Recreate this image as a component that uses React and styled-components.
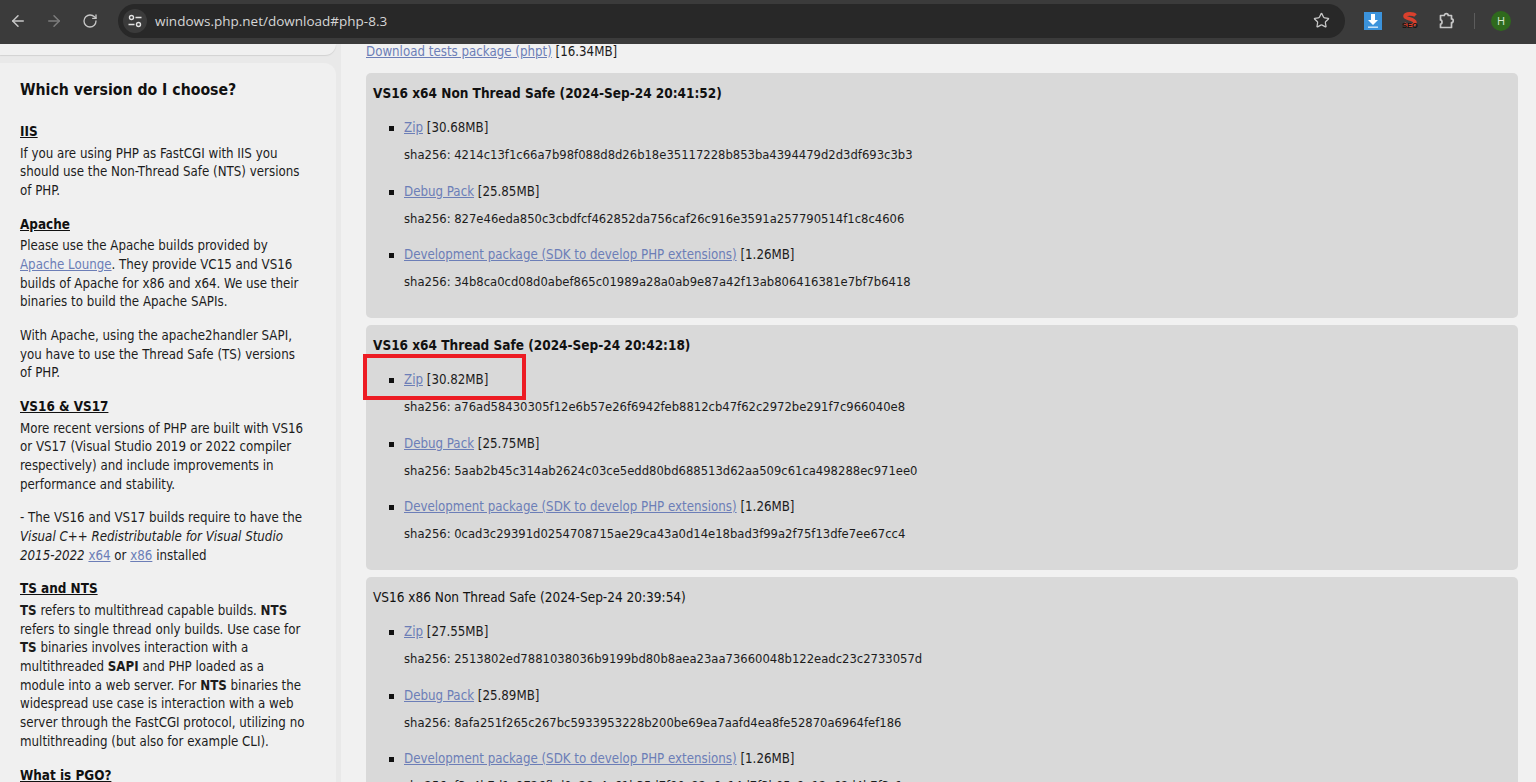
import React from "react";
import styled, { createGlobalStyle } from "styled-components";
import { ArrowLeft, ArrowRight, RotateCw, Star } from "lucide-react";

const builds = [
  {
    title: "VS16 x64 Non Thread Safe (2024-Sep-24 20:41:52)",
    strong: true,
    files: [
      ["Zip", "30.68MB", "4214c13f1c66a7b98f088d8d26b18e35117228b853ba4394479d2d3df693c3b3"],
      ["Debug Pack", "25.85MB", "827e46eda850c3cbdfcf462852da756caf26c916e3591a257790514f1c8c4606"],
      ["Development package (SDK to develop PHP extensions)", "1.26MB", "34b8ca0cd08d0abef865c01989a28a0ab9e87a42f13ab806416381e7bf7b6418"],
    ],
  },
  {
    title: "VS16 x64 Thread Safe (2024-Sep-24 20:42:18)",
    strong: true,
    marked: true,
    files: [
      ["Zip", "30.82MB", "a76ad58430305f12e6b57e26f6942feb8812cb47f62c2972be291f7c966040e8"],
      ["Debug Pack", "25.75MB", "5aab2b45c314ab2624c03ce5edd80bd688513d62aa509c61ca498288ec971ee0"],
      ["Development package (SDK to develop PHP extensions)", "1.26MB", "0cad3c29391d0254708715ae29ca43a0d14e18bad3f99a2f75f13dfe7ee67cc4"],
    ],
  },
  {
    title: "VS16 x86 Non Thread Safe (2024-Sep-24 20:39:54)",
    files: [
      ["Zip", "27.55MB", "2513802ed7881038036b9199bd80b8aea23aa73660048b122eadc23c2733057d"],
      ["Debug Pack", "25.89MB", "8afa251f265c267bc5933953228b200be69ea7aafd4ea8fe52870a6964fef186"],
      ["Development package (SDK to develop PHP extensions)", "1.26MB", "f3a4b7d1c9726fbd0a28c4e61b35d7f90c82e6a14d7f3b05c9e12a68d4b7f3c1"],
    ],
  },
];

export default function App() {
  return (
    <Screen>
      <GlobalStyle />
      <Toolbar>
        <NavButton><ArrowLeft size={18} /></NavButton>
        <NavButton $off><ArrowRight size={18} /></NavButton>
        <NavButton><RotateCw size={16} /></NavButton>
        <Omnibox>
          <SiteChip>
            <svg width="16" height="16" viewBox="0 0 16 16" fill="none" stroke="#e3e3e3" strokeWidth="1.4">
              <circle cx="4.5" cy="4.5" r="2" />
              <path d="M8.5 4.5h6M1.5 11.5h6" />
              <circle cx="11.5" cy="11.5" r="2" />
            </svg>
          </SiteChip>
          <Url>windows.php.net/download#php-8.3</Url>
          <Star size={17} color="#c7c7c7" strokeWidth={1.8} />
        </Omnibox>
        <Extensions>
          <svg width="18" height="18" viewBox="0 0 18 18">
            <rect width="18" height="18" fill="#3b93dc" />
            <path d="M7 2h4v6h3l-5 5-5-5h3z" fill="#fff" />
            <rect x="4" y="14.500" width="10" height="1.400" fill="#d5e9f9" />
          </svg>
          <SeoLogo>
            <svg width="18" height="17" viewBox="0 0 18 17">
              <path d="M14.500 3.500C12.500 1.500 4.500 1 4 4c-.5 3 10 2.500 10 6.500 0 3.500-8 3.800-11 1" fill="none" stroke="#d9402d" strokeWidth="3.600" />
            </svg>
            <SeoText>SEO</SeoText>
          </SeoLogo>
          <ExtensionsIcon width="18" height="18" viewBox="0 0 18 18" fill="none" stroke="#c7c7c7" strokeWidth="1.700" strokeLinejoin="round">
            <path d="M2.500 3.500h3.800c0-2.600 3.900-2.600 3.900 0h3.300v3.400c2.300 0 2.300 3.800 0 3.800v4.800H2.500v-3.400c2 0 2-4.200 0-4.200z" />
          </ExtensionsIcon>
          <Divider />
          <Avatar>H</Avatar>
        </Extensions>
      </Toolbar>

      <Page>
        <Sidebar>
          <TopCard />
          <InfoCard>
            <InfoTitle>Which version do I choose?</InfoTitle>
            <InfoHeading>IIS</InfoHeading>
            <InfoText>
              If you are using PHP as FastCGI with IIS you<br />
              should use the Non-Thread Safe (NTS) versions<br />
              of PHP.
            </InfoText>
            <InfoHeading>Apache</InfoHeading>
            <InfoText>
              Please use the Apache builds provided by<br />
              <FileLink>Apache Lounge</FileLink>. They provide VC15 and VS16<br />
              builds of Apache for x86 and x64. We use their<br />
              binaries to build the Apache SAPIs.
            </InfoText>
            <InfoText>
              With Apache, using the apache2handler SAPI,<br />
              you have to use the Thread Safe (TS) versions<br />
              of PHP.
            </InfoText>
            <InfoHeading>VS16 &amp; VS17</InfoHeading>
            <InfoText>
              More recent versions of PHP are built with VS16<br />
              or VS17 (Visual Studio 2019 or 2022 compiler<br />
              respectively) and include improvements in<br />
              performance and stability.
            </InfoText>
            <InfoText>
              - The VS16 and VS17 builds require to have the<br />
              <em>Visual C++ Redistributable for Visual Studio<br />
              2015-2022</em> <FileLink>x64</FileLink> or <FileLink>x86</FileLink> installed
            </InfoText>
            <InfoHeading>TS and NTS</InfoHeading>
            <InfoText>
              <b>TS</b> refers to multithread capable builds. <b>NTS</b><br />
              refers to single thread only builds. Use case for<br />
              <b>TS</b> binaries involves interaction with a<br />
              multithreaded <b>SAPI</b> and PHP loaded as a<br />
              module into a web server. For <b>NTS</b> binaries the<br />
              widespread use case is interaction with a web<br />
              server through the FastCGI protocol, utilizing no<br />
              multithreading (but also for example CLI).
            </InfoText>
            <InfoHeading>What is PGO?</InfoHeading>
          </InfoCard>
        </Sidebar>

        <Main>
          <TestsLine>
            <FileLink>Download tests package (phpt)</FileLink> [16.34MB]
          </TestsLine>
          {builds.map((build) => (
            <BuildBox key={build.title}>
              <BuildTitle $strong={build.strong}>{build.title}</BuildTitle>
              <FileList>
                {build.files.map(([name, size, hash], i) => (
                  <FileItem key={name}>
                    {build.marked && i === 0 && <Highlight />}
                    <FileLine>
                      <FileLink>{name}</FileLink> [{size}]
                    </FileLine>
                    <HashLine>sha256: {hash}</HashLine>
                  </FileItem>
                ))}
              </FileList>
            </BuildBox>
          ))}
        </Main>
      </Page>
    </Screen>
  );
}

const GlobalStyle = createGlobalStyle`
  html, body {
    margin: 0;
    height: 100%;
    overflow: hidden;
    background: #f0f0f0;
  }
`;

const Screen = styled.div`
  width: 1536px;
  height: 782px;
  overflow: hidden;
  font-family: "DejaVu Sans Condensed", "DejaVu Sans", sans-serif;
  font-stretch: condensed;
  font-size: 13.200px;
  color: #1c1c1c;
`;

const Toolbar = styled.header`
  height: 44px;
  box-sizing: border-box;
  padding: 3px 0 6px 0;
  background: #3b3b3b;
  display: flex;
  align-items: center;
`;

const NavButton = styled.div`
  width: 36px;
  display: flex;
  justify-content: center;
  color: ${(p) => (p.$off ? "#7d7d7d" : "#c7c7c7")};
`;

const Omnibox = styled.div`
  width: 1227px;
  height: 34px;
  margin-left: 10px;
  padding: 0 15px 0 5px;
  box-sizing: border-box;
  background: #282828;
  border-radius: 17px;
  display: flex;
  align-items: center;
`;

const SiteChip = styled.div`
  width: 24px;
  height: 24px;
  border-radius: 50%;
  background: #3b3b3b;
  display: flex;
  align-items: center;
  justify-content: center;
`;

const Url = styled.span`
  flex: 1;
  margin-left: 8px;
  font-family: "Open Sans", sans-serif;
  font-stretch: normal;
  font-size: 13.500px;
  color: #d6d6d6;
`;

const Extensions = styled.div`
  margin-left: 19px;
  display: flex;
  align-items: center;
`;

const SeoLogo = styled.div`
  position: relative;
  width: 18px;
  height: 18px;
  margin-left: 19px;
`;

const SeoText = styled.span`
  position: absolute;
  left: 1px;
  top: 9px;
  font-family: "Liberation Sans", sans-serif;
  font-stretch: normal;
  font-size: 7.500px;
  font-weight: 700;
  color: #141414;
`;

const ExtensionsIcon = styled.svg`
  margin-left: 19px;
`;

const Divider = styled.span`
  width: 1px;
  height: 16px;
  margin: 0 16px 0 18px;
  background: #5c5c5c;
`;

const Avatar = styled.div`
  width: 20px;
  height: 20px;
  border-radius: 50%;
  background: #2f6a1d;
  color: #d8e6d2;
  font-family: "Open Sans", sans-serif;
  font-stretch: normal;
  font-size: 11px;
  display: flex;
  align-items: center;
  justify-content: center;
`;

const Page = styled.div`
  display: flex;
  align-items: stretch;
  height: 738px;
  overflow: hidden;
  background: #f1f1f1;
`;

const Sidebar = styled.aside`
  width: 341px;
  flex: none;
  padding-right: 5px;
  box-sizing: border-box;
  background: #e9e9e9;
`;

const TopCard = styled.div`
  height: 11px;
  background: #f0f0f0;
  border-radius: 0 0 12px 0;
  box-shadow: 0 1px 1px #d2d2d2;
`;

const InfoCard = styled.div`
  margin-top: 8px;
  padding: 17px 20px;
  background: #f0f0f0;
  border-radius: 0 12px 0 0;
`;

const InfoTitle = styled.h2`
  margin: 0 0 23px;
  font-size: 15.700px;
  line-height: 20px;
  font-weight: 700;
  color: #111;
`;

const InfoHeading = styled.h3`
  margin: 0 0 3.500px;
  font-size: 13.400px;
  line-height: 18px;
  font-weight: 700;
  text-decoration: underline;
  color: #111;
`;

const InfoText = styled.p`
  margin: 0 0 15px;
  line-height: 18.700px;
`;

const Main = styled.main`
  flex: 1;
  padding: 0 18px 0 25px;
`;

const TestsLine = styled.div`
  height: 29px;
  line-height: 16px;
`;

const BuildBox = styled.section`
  margin-bottom: 7px;
  padding: 11px 7px 8.500px;
  background: #d9d9d9;
  border-radius: 5px;
`;

const BuildTitle = styled.div`
  font-size: 13.500px;
  line-height: 18px;
  font-weight: ${(p) => (p.$strong ? 700 : 400)};
  color: #111;
`;

const FileList = styled.ul`
  margin: 17px 0 0;
  padding: 0 0 0 31px;
  list-style: none;
`;

const FileItem = styled.li`
  position: relative;
  margin-bottom: 18.500px;

  &::before {
    content: "";
    position: absolute;
    left: -15px;
    top: 7px;
    width: 5px;
    height: 5px;
    background: #111;
  }
`;

const FileLine = styled.div`
  line-height: 18px;
`;

const HashLine = styled.div`
  margin-top: 9px;
  font-size: 12.900px;
  line-height: 18px;
`;

const FileLink = styled.a`
  color: #6c7eb7;
  text-decoration: underline;
`;

const Highlight = styled.span`
  position: absolute;
  left: -41px;
  top: -17px;
  width: 163px;
  height: 46px;
  box-sizing: border-box;
  border: 4px solid #ed1c24;
`;
